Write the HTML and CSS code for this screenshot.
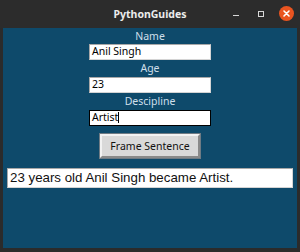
FILE: index.html
```html
<!DOCTYPE html>
<html>
<head>
<meta charset="UTF-8">
<title>PythonGuides</title>
<link rel="stylesheet" href="styles.css">
</head>
<body>

<div class="window">
  <div class="titlebar">
    <span class="title">PythonGuides</span>
    <div class="controls">
      <span class="btn-min"></span>
      <span class="btn-max"></span>
      <span class="btn-close">
        <svg width="15" height="15" viewBox="0 0 15 15">
          <path d="M5 5 L10 10 M10 5 L5 10" stroke="#fff" stroke-width="1.6" stroke-linecap="round"/>
        </svg>
      </span>
    </div>
  </div>

  <div class="content">
    <div class="label">Name</div>
    <div class="entry">Anil Singh</div>
    <div class="label">Age</div>
    <div class="entry">23</div>
    <div class="label">Descipline</div>
    <div class="entry focused">Artist<span class="cursor"></span></div>

    <div class="button">Frame Sentence</div>

    <div class="result">23 years old Anil Singh became Artist.</div>
  </div>
</div>

</body>
</html>
```

FILE: styles.css
```css
* {
  margin: 0;
  padding: 0;
  box-sizing: border-box;
}

body {
  background: #2b2b2b;
  width: 300px;
  height: 252px;
  overflow: hidden;
}

.window {
  width: 300px;
  height: 252px;
  display: flex;
  flex-direction: column;
}

.titlebar {
  height: 28px;
  position: relative;
  display: flex;
  align-items: center;
  justify-content: center;
  background: #2c2c2c;
}

.title {
  font-family: "Noto Sans", sans-serif;
  font-weight: bold;
  font-size: 10.5px;
  color: #ececec;
}

.controls {
  position: absolute;
  right: 6px;
  top: 6px;
  display: flex;
  align-items: center;
  gap: 0;
}

.btn-min {
  width: 6px;
  height: 1px;
  background: #d8d8d8;
  margin-top: 4px;
  margin-right: 19px;
}

.btn-max {
  width: 6px;
  height: 6px;
  border: 1px solid #d8d8d8;
  margin-right: 15px;
}

.btn-close {
  width: 15px;
  height: 15px;
  border-radius: 50%;
  background: #e95420;
  display: flex;
}

.content {
  margin: 0 3px;
  height: 220px;
  background: #0e4a6b;
  display: flex;
  flex-direction: column;
  align-items: center;
  font-family: "Noto Sans", sans-serif;
  font-size: 10.5px;
}

.label {
  height: 16px;
  line-height: 16px;
  color: #cfdfea;
}

.label + .entry + .label {
  height: 17px;
}

.entry {
  width: 122px;
  height: 16px;
  line-height: 13px;
  padding-left: 2px;
  background: #fff;
  color: #000;
  border: 1px solid #d4d4d4;
  border-top-color: #a8a8a8;
  border-left-color: #a8a8a8;
}

.entry.focused {
  border: 1px solid #000;
}

.cursor {
  display: inline-block;
  width: 1px;
  height: 11px;
  background: #000;
  vertical-align: -2px;
}

.button {
  margin-top: 8px;
  width: 100px;
  height: 24px;
  line-height: 20px;
  text-align: center;
  background: #d9d9d9;
  color: #111;
  border: 2px solid;
  border-color: #f2f2f2 #8a8a8a #8a8a8a #f2f2f2;
  outline: 1px solid #6f7b84;
}

.result {
  margin-top: 10px;
  align-self: stretch;
  margin-left: 4px;
  margin-right: 4px;
  height: 20px;
  line-height: 17px;
  padding-left: 2px;
  background: #fff;
  color: #111;
  font-family: "Liberation Sans", sans-serif;
  font-size: 13.3px;
  border: 1px solid #d4d4d4;
  border-top-color: #a8a8a8;
  border-left-color: #a8a8a8;
}
```
